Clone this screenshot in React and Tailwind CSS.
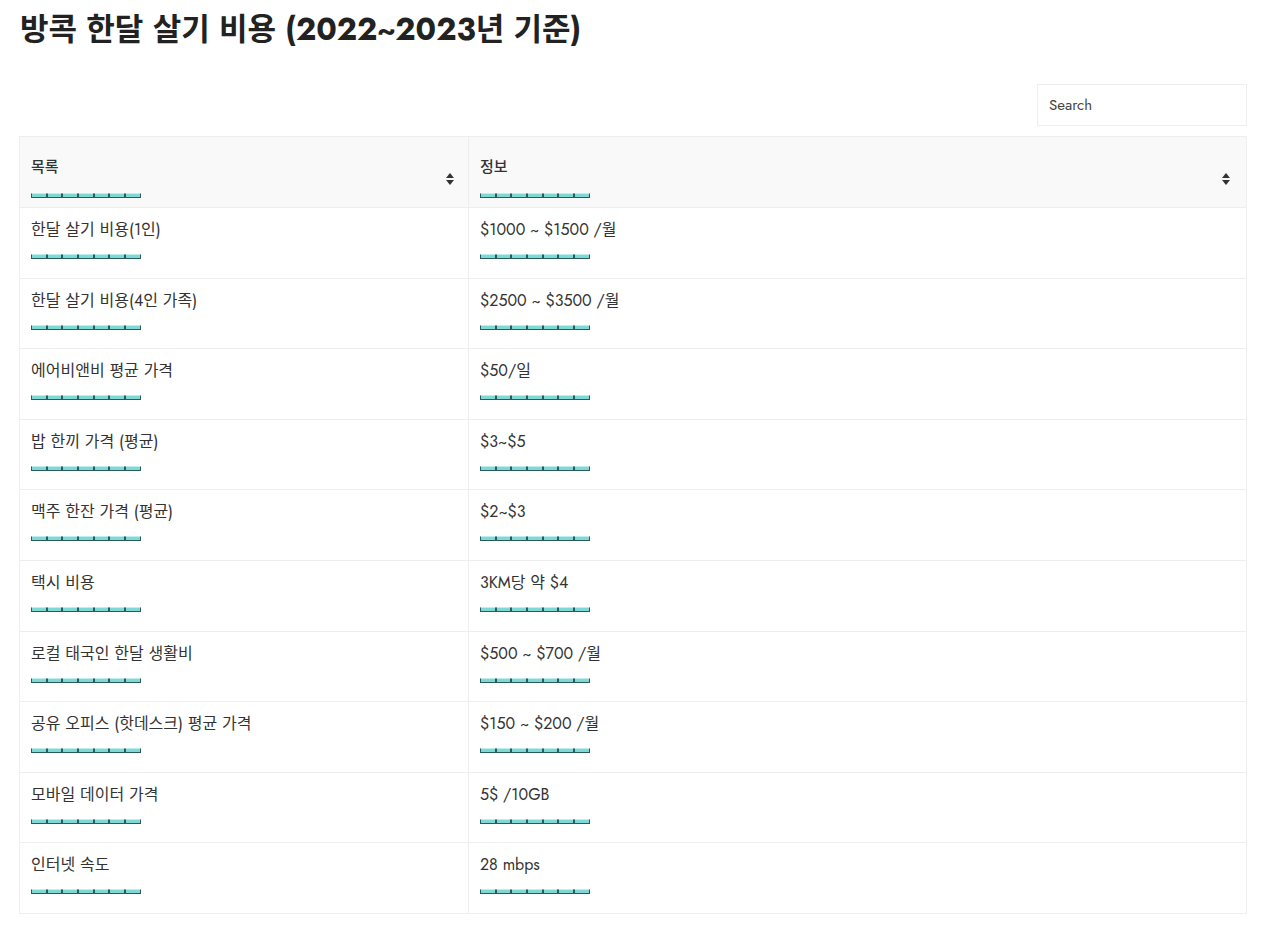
const rows = [
  ["한달 살기 비용(1인)", "$1000 ~ $1500 /월"],
  ["한달 살기 비용(4인 가족)", "$2500 ~ $3500 /월"],
  ["에어비앤비 평균 가격", "$50/일"],
  ["밥 한끼 가격 (평균)", "$3~$5"],
  ["맥주 한잔 가격 (평균)", "$2~$3"],
  ["택시 비용", "3KM당 약 $4"],
  ["로컬 태국인 한달 생활비", "$500 ~ $700 /월"],
  ["공유 오피스 (핫데스크) 평균 가격", "$150 ~ $200 /월"],
  ["모바일 데이터 가격", "5$ /10GB"],
  ["인터넷 속도", "28 mbps"],
];

function Bar() {
  return (
    <div className="flex mt-[14px] h-[5px]">
      {Array.from({ length: 7 }).map((_, i) => (
        <div key={i} className="w-[15.7px] h-[5px] bg-[#7ed8d4] border border-[#2a5a5a] border-t-[#bfeeee]" />
      ))}
    </div>
  );
}

function Sort() {
  return (
    <svg width="8" height="12" viewBox="0 0 8 12" className="shrink-0">
      <path d="M4 0L8 5H0z" fill="#333" />
      <path d="M4 12L0 7h8z" fill="#333" />
    </svg>
  );
}

export default function App() {
  return (
    <div className="bg-white min-h-[935px] text-[#333]" style={{ fontFamily: "Jost, Lato, 'Noto Sans CJK KR', sans-serif" }}>
      <div className="px-[19px] pt-[8px] pb-[22px]">
        <h1 className="text-[31px] font-bold text-[#222] leading-[44px] ml-[1px]">방콕 한달 살기 비용 (2022~2023년 기준)</h1>
        <div className="flex justify-end mt-[32px] mr-[14px]">
          <div className="w-[210px] h-[42px] border border-[#eee] px-[11px] flex items-center text-[15px] text-[#444]">Search</div>
        </div>
        <table className="w-[1228px] mt-[10px] border-collapse border border-[#eee] text-[16px]">
          <thead>
            <tr className="bg-[#f9f9f9] h-[71px]">
              <th className="w-[449px] border border-[#eee] px-[11px] text-left font-medium align-top pt-[12px]">
                <div className="flex justify-between items-center"><span className="text-[15px]">목록</span><span className="mt-[24px] mr-[3px]"><Sort /></span></div>
                <div className="-mt-[6px]"><Bar /></div>
              </th>
              <th className="border border-[#eee] px-[11px] text-left font-medium align-top pt-[12px]">
                <div className="flex justify-between items-center"><span className="text-[15px]">정보</span><span className="mt-[24px] mr-[5px]"><Sort /></span></div>
                <div className="-mt-[6px]"><Bar /></div>
              </th>
            </tr>
          </thead>
          <tbody>
            {rows.map(([a, b]) => (
              <tr key={a} className="h-[70.6px]">
                <td className="border border-[#eee] px-[11px] align-top pt-[12px]"><div className="leading-[20px]">{a}</div><Bar /></td>
                <td className="border border-[#eee] px-[11px] align-top pt-[12px]"><div className="leading-[20px]">{b}</div><Bar /></td>
              </tr>
            ))}
          </tbody>
        </table>
      </div>
    </div>
  );
}
